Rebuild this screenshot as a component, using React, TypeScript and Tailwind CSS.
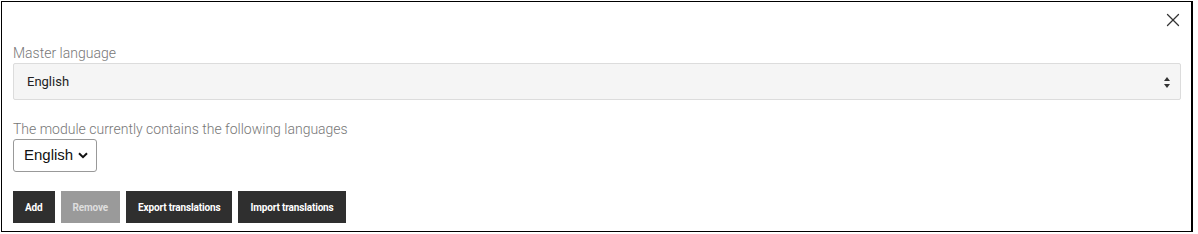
import { X } from 'lucide-react';

export default function App() {
  return (
    <div className="w-[1198px] h-[234px] bg-white pl-[1px] pt-[1px]" style={{ fontFamily: 'Roboto, "Liberation Sans", sans-serif' }}>
      <div className="relative w-[1192px] h-[231px] border-t border-l border-b border-r-2 border-black px-[11px]">
        {/* Close */}
        <button className="absolute right-[7px] top-[7px] text-[#333]">
          <X size={22} strokeWidth={1.4} />
        </button>

        {/* Master language */}
        <div className="pt-[42px]">
          <label className="block text-[14px] leading-[18px] text-[#777] font-light">Master language</label>
          <div className="relative mt-[1px] h-[37px] w-[1168px] bg-[#f5f5f5] border border-[#dcdcdc] rounded-[2px] flex items-center pl-[13px]">
            <span className="text-[13px] text-[#222]">English</span>
            <svg className="absolute right-[10px] top-[13px]" width="6" height="11" viewBox="0 0 6 11">
              <path d="M3 0 L6 4 L0 4 Z" fill="#333" />
              <path d="M0 7 L6 7 L3 11 Z" fill="#333" />
            </svg>
          </div>
        </div>

        {/* Languages */}
        <div className="mt-[20px]">
          <label className="block text-[14px] leading-[18px] text-[#777] font-light">The module currently contains the following languages</label>
          <div className="mt-[1px] inline-flex items-center h-[33px] w-[84px] border border-[#999] rounded-[3px] bg-white pl-[10px] pr-[8px] justify-between">
            <span className="text-[15px] text-[#111]" style={{ fontFamily: '"Liberation Sans", Arial, sans-serif' }}>English</span>
            <svg width="10" height="7" viewBox="0 0 10 7">
              <path d="M1 1.2 L5 5.2 L9 1.2" stroke="#111" strokeWidth="2" fill="none" />
            </svg>
          </div>
        </div>

        {/* Buttons */}
        <div className="mt-[19px] flex gap-[6px]">
          <button className="h-[32px] px-[12px] bg-[#2f2f2f] text-white text-[10px] font-bold tracking-[-0.15px]">Add</button>
          <button className="h-[32px] px-[12px] bg-[#9a9a9a] text-[#dedede] text-[10px] font-bold tracking-[-0.15px]">Remove</button>
          <button className="h-[32px] px-[12px] bg-[#2f2f2f] text-white text-[10px] font-bold tracking-[-0.15px]">Export translations</button>
          <button className="h-[32px] px-[12px] bg-[#2f2f2f] text-white text-[10px] font-bold tracking-[-0.15px]">Import translations</button>
        </div>
      </div>
    </div>
  );
}
